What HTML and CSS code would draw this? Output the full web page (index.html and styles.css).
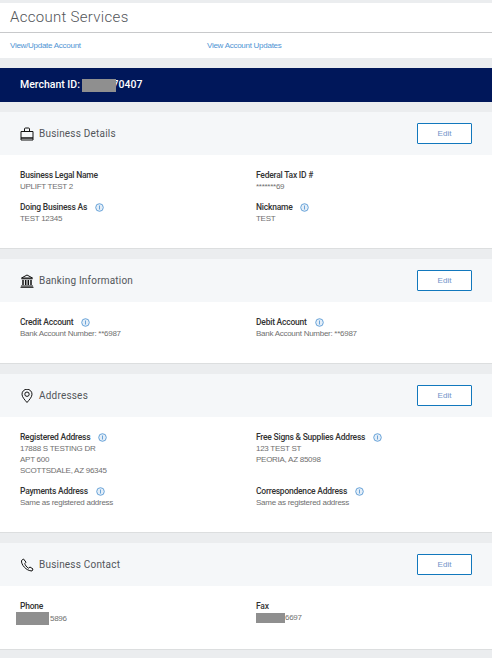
FILE: index.html
```html
<!DOCTYPE html>
<html>
<head>
<meta charset="utf-8"/>
<link rel="stylesheet" href="styles.css">
<title>Account Services</title>
</head>
<body>

<div class="topblock">
  <h1 class="pagetitle">Account Services</h1>
  <div class="tabs">
    <a class="tablink tabfirst">View/Update Account</a>
    <a class="tablink">View Account Updates</a>
  </div>
</div>

<div class="merchant">Merchant ID: <span class="redact redactmerchant"></span>70407</div>

<div class="section">
  <div class="sectionhead">
    <svg class="headicon" viewBox="0 0 14 14"><path d="M1 4.500h12v8.500H1zM4.500 4.500V2a1 1 0 0 1 1-1h3a1 1 0 0 1 1 1v2.500"/><path class="thick" d="M1 11h12"/></svg>
    <span class="headtitle">Business Details</span>
    <button class="editbtn">Edit</button>
  </div>
  <div class="grid">
    <div class="item"><div class="label">Business Legal Name</div><div class="value">UPLIFT TEST 2</div></div>
    <div class="item"><div class="label">Federal Tax ID #</div><div class="value">*******69</div></div>
    <div class="item"><div class="label">Doing Business As <svg class="info" viewBox="0 0 9 9"><circle cx="4.500" cy="4.500" r="3.800"/><path d="M4.500 2.500v4"/></svg></div><div class="value">TEST 12345</div></div>
    <div class="item"><div class="label">Nickname <svg class="info" viewBox="0 0 9 9"><circle cx="4.500" cy="4.500" r="3.800"/><path d="M4.500 2.500v4"/></svg></div><div class="value">TEST</div></div>
  </div>
</div>

<div class="section">
  <div class="sectionhead">
    <svg class="headicon" viewBox="0 0 14 14"><path d="M7 1 1.500 4h11zM1.500 4.800h11M1 12h12M.5 13.300h13"/><path class="thick" d="M3 6v5M5.700 6v5M8.300 6v5M11 6v5"/></svg>
    <span class="headtitle">Banking Information</span>
    <button class="editbtn">Edit</button>
  </div>
  <div class="grid">
    <div class="item"><div class="label">Credit Account <svg class="info" viewBox="0 0 9 9"><circle cx="4.500" cy="4.500" r="3.800"/><path d="M4.500 2.500v4"/></svg></div><div class="value">Bank Account Number: **6987</div></div>
    <div class="item"><div class="label">Debit Account <svg class="info" viewBox="0 0 9 9"><circle cx="4.500" cy="4.500" r="3.800"/><path d="M4.500 2.500v4"/></svg></div><div class="value">Bank Account Number: **6987</div></div>
  </div>
</div>

<div class="section">
  <div class="sectionhead">
    <svg class="headicon" viewBox="0 0 14 14"><path d="M7 13.500C4.500 10.500 2 8 2 5.200a5 5 0 0 1 10 0C12 8 9.500 10.500 7 13.500z"/><circle cx="7" cy="5.200" r="2.200"/></svg>
    <span class="headtitle">Addresses</span>
    <button class="editbtn">Edit</button>
  </div>
  <div class="grid">
    <div class="item"><div class="label">Registered Address <svg class="info" viewBox="0 0 9 9"><circle cx="4.500" cy="4.500" r="3.800"/><path d="M4.500 2.500v4"/></svg></div><div class="value">17888 S TESTING DR</div><div class="value">APT 600</div><div class="value">SCOTTSDALE, AZ 96345</div></div>
    <div class="item"><div class="label">Free Signs &amp; Supplies Address <svg class="info" viewBox="0 0 9 9"><circle cx="4.500" cy="4.500" r="3.800"/><path d="M4.500 2.500v4"/></svg></div><div class="value">123 TEST ST</div><div class="value">PEORIA, AZ 85098</div></div>
    <div class="item"><div class="label">Payments Address <svg class="info" viewBox="0 0 9 9"><circle cx="4.500" cy="4.500" r="3.800"/><path d="M4.500 2.500v4"/></svg></div><div class="value">Same as registered address</div></div>
    <div class="item"><div class="label">Correspondence Address <svg class="info" viewBox="0 0 9 9"><circle cx="4.500" cy="4.500" r="3.800"/><path d="M4.500 2.500v4"/></svg></div><div class="value">Same as registered address</div></div>
  </div>
</div>

<div class="section">
  <div class="sectionhead">
    <svg class="headicon" viewBox="0 0 14 14"><path d="M3.500 1 1.500 2.500C1 6.500 6 12.800 12 13l1-2-3-2-1.500 1.200C6.500 9 5 7 4.800 5.500L6 4.200z"/></svg>
    <span class="headtitle">Business Contact</span>
    <button class="editbtn">Edit</button>
  </div>
  <div class="grid">
    <div class="item"><div class="label">Phone</div><div class="value"><span class="redact redactphone"></span>5896</div></div>
    <div class="item"><div class="label">Fax</div><div class="value"><span class="redact redactfax"></span>6697</div></div>
  </div>
</div>

</body>
</html>
```

FILE: styles.css
```css
html, body {
  margin: 0;
  padding: 0;
}

body {
  background-color: #ebedef;
  font-family: "Liberation Sans", Arial, sans-serif;
  padding-top: 3px;
  padding-bottom: 10px;
}

.topblock {
  background-color: #ffffff;
}

.pagetitle {
  margin: 0;
  height: 29px;
  line-height: 29px;
  padding-left: 10px;
  font-family: Roboto, sans-serif;
  font-size: 15px;
  font-weight: 300;
  letter-spacing: 0.3px;
  color: #53565a;
  border-bottom: 1px solid #c8c9cb;
}

.tabs {
  display: flex;
  height: 25px;
  align-items: center;
  padding-left: 10px;
}

.tablink {
  font-size: 8px;
  letter-spacing: -0.27px;
  color: #4f94d4;
}

.tabfirst {
  width: 197px;
}

.merchant {
  margin-top: 10px;
  height: 34px;
  line-height: 33px;
  padding-left: 20px;
  background-color: #00175a;
  color: #ffffff;
  font-family: Roboto, sans-serif;
  font-size: 10.500px;
  font-weight: 500;
}

.redact {
  display: inline-block;
  position: relative;
  background-color: #8f8f8f;
  vertical-align: middle;
}

.redactmerchant {
  width: 34px;
  height: 13px;
  margin-left: -1px;
  margin-right: -3px;
}

.redactphone {
  width: 33px;
  height: 13px;
  margin-left: -4px;
  margin-right: 1px;
}

.redactfax {
  width: 29px;
  height: 10px;
}

.section {
  margin-top: 10px;
  border-bottom: 1px solid #dcdedf;
  background-color: #ffffff;
  padding-bottom: 24px;
}

.sectionhead {
  display: flex;
  align-items: center;
  height: 43px;
  padding: 0 20px;
  background-color: #f5f7f9;
}

.headicon {
  width: 14px;
  height: 14px;
  margin-right: 5px;
  fill: none;
  stroke: #111111;
  stroke-width: 1;
}

.headicon .thick {
  stroke-width: 1.500;
}

.headtitle {
  flex: 1;
  margin-top: -1px;
  font-family: Roboto, sans-serif;
  font-size: 10px;
  letter-spacing: 0.2px;
  color: #53565a;
}

.editbtn {
  width: 55px;
  height: 21px;
  padding: 0;
  background-color: #ffffff;
  border: 1px solid #1278bd;
  border-radius: 1px;
  font-family: "Liberation Sans", Arial, sans-serif;
  font-size: 8px;
  color: #6f93c8;
}

.grid {
  display: grid;
  grid-template-columns: 236px 1fr;
  row-gap: 10px;
  padding: 15px 20px 0;
}

.label {
  font-family: Roboto, sans-serif;
  font-size: 8.500px;
  line-height: 11px;
  font-weight: 500;
  letter-spacing: -0.23px;
  color: #333333;
}

.value {
  font-size: 8px;
  line-height: 11px;
  letter-spacing: -0.27px;
  color: #6f6f6f;
}

.info {
  width: 9px;
  height: 9px;
  margin-left: 6px;
  vertical-align: -2px;
  fill: #e4eef8;
  stroke: #4a90d0;
  stroke-width: 0.800;
}
```
